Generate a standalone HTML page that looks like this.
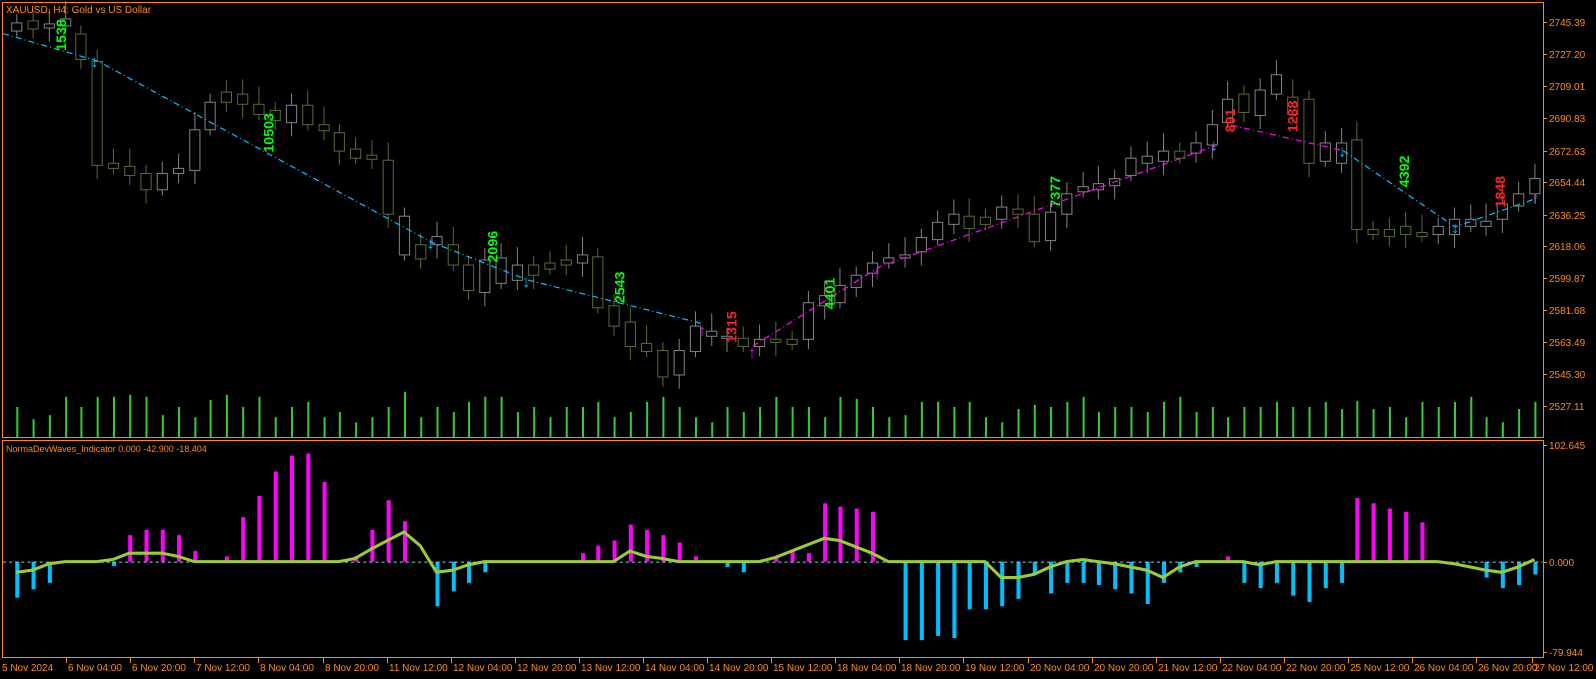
<!DOCTYPE html>
<html><head><meta charset="utf-8"><style>
html,body{margin:0;padding:0;background:#000;width:1596px;height:679px;overflow:hidden}
svg{display:block;font-family:"Liberation Sans",sans-serif}
</style></head><body>
<svg id="s" width="1596" height="679" xmlns="http://www.w3.org/2000/svg">
<rect width="1596" height="679" fill="#000"/>
<g transform="scale(1.0175)">
<g id="cd"></g>
<g id="vol" stroke="#32cd32" stroke-width="2"></g>
<g id="ind"></g>
<line x1="3" y1="552.5" x2="1516" y2="552.5" stroke="#7fd8d8" stroke-dasharray="3,3"/>
<polyline id="gl" fill="none" stroke="#9acd32" stroke-width="3"/>
<g fill="none" stroke-width="1.2" stroke-dasharray="6,3,1,3">
<polyline stroke="#00bfff" points="3,33 96,60 424,238 518,275 690,318"/>
<polyline stroke="#ff00ff" points="740,340 865,262 1195,143"/>
<polyline stroke="#ff00ff" points="1210,123 1320,148"/>
<polyline stroke="#00bfff" points="1320,148 1430,223 1510,195"/>
</g>
<g font-weight="bold" font-size="14">
<text transform="translate(65,50) rotate(-90)" fill="#00ff00">1538</text>
<text transform="translate(269,150) rotate(-90)" fill="#00ff00">10503</text>
<text transform="translate(489,258) rotate(-90)" fill="#00ff00">2096</text>
<text transform="translate(614,298) rotate(-90)" fill="#00ff00">2543</text>
<text transform="translate(724,337) rotate(-90)" fill="#ff2020">1315</text>
<text transform="translate(820,304) rotate(-90)" fill="#00ff00">4401</text>
<text transform="translate(1042,204) rotate(-90)" fill="#00ff00">7377</text>
<text transform="translate(1214,130) rotate(-90)" fill="#ff2020">891</text>
<text transform="translate(1275,130) rotate(-90)" fill="#ff2020">1288</text>
<text transform="translate(1385,184) rotate(-90)" fill="#00ff00">4392</text>
<text transform="translate(1479,204) rotate(-90)" fill="#ff2020">1848</text>
</g>
<g font-size="16" font-weight="bold">
<text x="89" y="66" fill="#00bfff">↓</text><text x="419" y="244" fill="#00bfff">↓</text>
<text x="513" y="282" fill="#00bfff">↓</text><text x="1315" y="154" fill="#00bfff">↓</text>
<text x="1426" y="229" fill="#00bfff">↓</text><text x="1189" y="148" fill="#00bfff">↓</text>
<text x="686" y="330" fill="#ff00ff">↑</text><text x="735" y="352" fill="#ff00ff">↑</text>
<text x="858" y="274" fill="#ff00ff">↑</text><text x="1505" y="200" fill="#ff00ff">↑</text>
</g>
</g>
<rect x="0" y="438" width="1596" height="3" fill="#000"/>
<g stroke="#ff8c00" stroke-width="1" fill="none">
<rect x="2.5" y="2.5" width="1541" height="435"/>
<rect x="2.5" y="440.5" width="1541" height="217"/>
</g>
<text x="6" y="13" fill="#ff8c00" font-size="10">XAUUSD, H4:  Gold vs US Dollar</text>
<text x="6" y="452" fill="#ff8c00" font-size="9">NormaDevWaves_Indicator 0.000 -42.900 -18.404</text>
<g id="ax" fill="#ff8c00" font-size="10"></g>
</svg>
<script>
var NS="http://www.w3.org/2000/svg";
function el(p,t,a){var e=document.createElementNS(NS,t);for(var k in a)e.setAttribute(k,a[k]);p.appendChild(e);return e;}
var C=[[22,30,0],[20,28,1],[23,27,0],[18,25,0],[33,58,1],[60,162,1],[160,165,1],[163,172,1],[170,186,1],[170,186,0],[165,170,0],[127,167,0],[100,127,0],[90,100,1],[92,102,1],[102,112,1],[108,118,1],[103,120,0],[103,122,1],[122,128,1],[130,148,1],[146,155,1],[152,156,1],[157,210,1],[212,250,0],[240,254,1],[232,240,0],[240,260,1],[260,285,1],[255,287,0],[253,278,0],[260,275,0],[260,270,1],[258,264,1],[255,260,1],[250,258,0],[252,302,1],[300,320,1],[316,340,1],[337,345,1],[344,370,1],[344,368,0],[320,345,0],[325,330,0],[330,332,0],[332,340,1],[333,340,0],[333,336,1],[333,338,1],[297,333,0],[290,300,0],[280,297,0],[270,282,0],[258,268,0],[253,258,0],[250,253,0],[233,247,0],[218,235,0],[210,220,0],[212,224,1],[213,220,1],[203,215,0],[205,210,1],[210,237,1],[208,236,0],[190,210,0],[183,188,0],[180,186,0],[175,182,0],[155,172,0],[153,160,0],[148,158,0],[148,155,1],[140,150,0],[122,142,0],[97,120,0],[92,110,1],[88,113,0],[73,92,0],[95,112,1],[97,160,1],[140,158,0],[140,160,0],[137,225,1],[225,230,1],[225,232,1],[222,230,1],[228,232,1],[222,230,0],[215,230,0],[215,222,0],[217,222,0],[200,215,0],[190,202,0],[175,190,0]];
var cd=document.getElementById('cd'),vol=document.getElementById('vol'),ind=document.getElementById('ind');
var st=(1508-16)/(C.length-1);
var H=[-34,-26,-20,0,0,0,-4,25,30,30,25,10,0,5,42,62,85,100,102,75,0,5,30,58,38,0,-42,-28,-20,-10,0,0,0,0,0,8,15,20,35,30,25,18,5,0,-5,-10,0,5,10,8,55,52,50,47,0,-74,-74,-70,-72,-45,-45,-42,-35,-12,-30,-20,-20,-22,-26,-30,-40,-20,-10,-5,0,5,-20,-25,-20,-32,-38,-25,-20,60,55,50,47,37,0,0,0,-15,-25,-22,-12,18,40];
var G=[-10,-8,-2,0,0,0,2,8,8,8,5,0,0,0,0,0,0,0,0,0,0,3,12,20,28,15,-10,-8,-3,0,0,0,0,0,0,0,0,0,10,5,3,0,0,0,0,0,0,4,10,16,22,20,14,8,0,0,0,0,0,0,0,-15,-15,-12,-5,0,2,0,-2,-5,-8,-15,-5,0,0,0,0,-3,0,0,0,0,0,0,0,0,0,0,0,-2,-5,-8,-10,-5,2,5,14];
var vh=[30,18,22,40,30,40,40,42,40,22,30,20,37,42,30,40,20,30,35,20,25,15,20,30,45,20,30,25,35,40,40,25,30,20,30,30,35,20,25,35,40,30,20,15,30,25,30,40,30,30,20,40,38,30,20,22,35,35,30,35,20,15,28,32,30,35,40,25,30,30,25,35,40,25,30,20,30,30,35,30,30,35,28,36,28,30,20,35,30,35,40,20,15,28,35,30];
var sc=(552-445)/102.645,pts=[];
C.forEach(function(c,i){
 var x=Math.round(16+i*st),col=c[2]?'#556b2f':'#808080';
 var t=Math.min(c[0],c[1]),b=Math.max(c[0],c[1]);
 el(cd,'line',{x1:x+.5,x2:x+.5,y1:t-8-(i%4)*3,y2:b+6+(i%3)*4,stroke:col});
 el(cd,'rect',{x:x-4.5,y:t+.5,width:10,height:Math.max(1,b-t),fill:'#000',stroke:col});
 var v=vh[i%vh.length];el(vol,'line',{x1:x+1,x2:x+1,y1:430-v,y2:431});
 var h=H[i]||0;if(h){var hh=h*sc;el(ind,'rect',{x:x-1,width:4,y:h>0?552-hh:552,height:Math.abs(hh),fill:h>0?'#ff00ff':'#00bfff'});}
 pts.push(x+','+(552-(G[i]||0)*sc));
});
document.getElementById('gl').setAttribute('points',pts.join(' '));
var ax=document.getElementById('ax');
var P=[["2745.39",22],["2727.20",53],["2709.01",85],["2690.83",116],["2672.63",148],["2654.44",179],["2636.25",211],["2618.06",242],["2599.87",273],["2581.68",305],["2563.49",336],["2545.30",368],["2527.11",399],["102.645",437.5],["0.000",552],["-79.944",641]];
P.forEach(function(p){var y=Math.round(p[1]*1.0175);el(ax,'line',{x1:1543,x2:1547,y1:y+.5,y2:y+.5,stroke:'#ff8c00'});var t=el(ax,'text',{x:1549,y:y+4});t.textContent=p[0];});
var T=["5 Nov 2024","6 Nov 04:00","6 Nov 20:00","7 Nov 12:00","8 Nov 04:00","8 Nov 20:00","11 Nov 12:00","12 Nov 04:00","12 Nov 20:00","13 Nov 12:00","14 Nov 04:00","14 Nov 20:00","15 Nov 12:00","18 Nov 04:00","18 Nov 20:00","19 Nov 12:00","20 Nov 04:00","20 Nov 20:00","21 Nov 12:00","22 Nov 04:00","22 Nov 20:00","25 Nov 12:00","26 Nov 04:00","26 Nov 20:00","27 Nov 12:00"];
T.forEach(function(s,i){var x=Math.round(2+i*64.1);if(i==24)x=1532;if(i>0)el(ax,'line',{x1:x+.5,x2:x+.5,y1:658,y2:663,stroke:'#ff8c00'});var t=el(ax,'text',{x:x+(i?2:0),y:671});t.textContent=s;});
</script>
</body></html>
